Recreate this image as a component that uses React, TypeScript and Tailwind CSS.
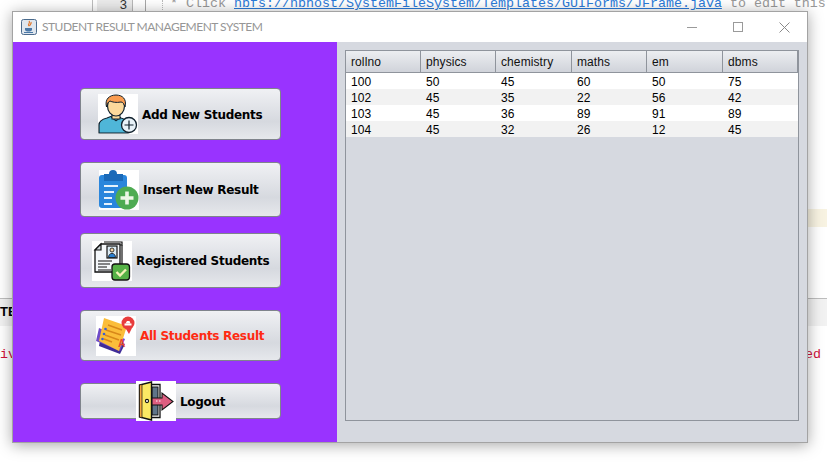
const F = "font-['Liberation_Sans',sans-serif]";

function IconAdd() {
  return (
    <svg viewBox="0 0 40 40" className="w-10 h-10 bg-white shrink-0">
      <path d="M1 39v-8c0-4 4-6 8-7l5-2h4l5 2c4 1 7 3 7 7v8z" fill="#4fb6d8" stroke="#10202c" strokeWidth="1.2" />
      <path d="M13 23l5 4 5-4" fill="#3c93b5" stroke="#10202c" strokeWidth="1" />
      <rect x="14" y="17" width="8" height="8" fill="#fbd89a" stroke="#10202c" strokeWidth="1" />
      <ellipse cx="18" cy="12" rx="8.5" ry="10" fill="#fcd99b" stroke="#10202c" strokeWidth="1.2" />
      <path d="M8.5 13c-2-8 3-12 9.500-12s11 4 9 12c-1-3-2-5-4-5-5 1-9 0-11-1-2 1-3 3-3.500 6z" fill="#fa9c50" stroke="#10202c" strokeWidth="1" />
      <circle cx="31" cy="31" r="7.5" fill="#e8f2f8" stroke="#10202c" strokeWidth="1.3" />
      <path d="M31 26.500v9M26.500 31h9" stroke="#10202c" strokeWidth="1.2" />
    </svg>
  );
}
function IconInsert() {
  return (
    <svg viewBox="0 0 40 40" className="w-10 h-10 bg-white shrink-0">
      <rect x="0" y="5" width="28" height="33" rx="3" fill="#2a86dc" />
      <path d="M14 0a4 4 0 0 1 4 4h6v7H5V4h5a4 4 0 0 1 4-4z" fill="#1a69b8" />
      <path d="M5 16h14M5 22h10M5 28h8M5 34h8" stroke="#e6f2fc" strokeWidth="2.2" />
      <circle cx="28" cy="28" r="11.500" fill="#4eab52" />
      <path d="M28 21.500v13M21.500 28h13" stroke="#eef6e8" strokeWidth="3.600" />
    </svg>
  );
}
function IconRegistered() {
  return (
    <svg viewBox="0 0 40 40" className="w-10 h-10 bg-white shrink-0">
      <path d="M12 1h18v3h-2" fill="none" stroke="#111" strokeWidth="1.200" />
      <path d="M30 4v20" stroke="#111" strokeWidth="1.200" />
      <path d="M9 3h19v28H3V9z" fill="#f4f7fa" stroke="#111" strokeWidth="1.300" />
      <path d="M3 9h6V3z" fill="#cfd6dc" stroke="#111" strokeWidth="1.200" />
      <rect x="15" y="5" width="10" height="12" fill="#dcecf5" stroke="#111" strokeWidth="1.200" />
      <circle cx="20" cy="9" r="2" fill="#f2d4a8" stroke="#111" strokeWidth="0.800" />
      <path d="M16.500 16.500c0-5.500 7-5.500 7 0z" fill="#2a7fd0" stroke="#111" strokeWidth="0.800" />
      <path d="M6 20h14M6 23h12M6 26h9M6 29h13" stroke="#111" strokeWidth="1.200" />
      <rect x="20" y="23" width="17.500" height="16" rx="3" fill="#55b146" stroke="#111" strokeWidth="1.300" />
      <path d="M24.500 31l3.500 3.500 6-6" fill="none" stroke="#f4f2b8" strokeWidth="2.400" />
    </svg>
  );
}
function IconAll() {
  return (
    <svg viewBox="0 0 40 40" className="w-10 h-10 bg-white shrink-0">
      <path d="M5 18l24 10-5 10L3 30z" fill="#3f2c98" />
      <path d="M3 12l26 11-5 12L0 25z" fill="#6f4cc8" />
      <path d="M8 2l23 8-8 25L3 25z" fill="#fbbd3a" />
      <path d="M12 9l14 5M10 14l15 5M9 19l14 5M8 23l8 3" stroke="#d8871a" strokeWidth="1.400" />
      <circle cx="9.500" cy="13" r="1.300" fill="#3c5fd0" />
      <circle cx="8" cy="18" r="1.300" fill="#3c5fd0" />
      <circle cx="6.500" cy="23" r="1.300" fill="#3c5fd0" />
      <text x="22" y="31" fontSize="10" fontWeight="700" fill="#e8452c" fontFamily="Liberation Sans">A</text>
      <path d="M30 13l3 5 3-6z" fill="#e83c3c" />
      <circle cx="32" cy="7" r="6.500" fill="#e83c3c" />
      <path d="M28.500 7.500h7v2h-7z" fill="#fff" />
      <path d="M31 5h2.500l1 2.500h-5z" fill="#fff" />
    </svg>
  );
}
function IconLogout() {
  return (
    <svg viewBox="0 0 40 40" className="w-10 h-10 bg-white shrink-0">
      <rect x="16" y="6" width="6" height="28" fill="#5f7489" stroke="#111" strokeWidth="1" />
      <path d="M16 3.500h8v28M16 36.500h8v-6" fill="none" stroke="#111" strokeWidth="1.300" />
      <path d="M15.500 1L3.500 4v32l12 3z" fill="#fbe964" stroke="#111" strokeWidth="1.400" />
      <path d="M3.500 4v32l2.500 .8V3.400z" fill="#f5a83c" stroke="#111" strokeWidth="0.700" />
      <circle cx="11" cy="20" r="1.600" fill="#fff" stroke="#111" strokeWidth="1.100" />
      <path d="M16 17h10v-5l11 8.500-11 8.500v-5H16z" fill="#dd5e80" stroke="#111" strokeWidth="1.100" />
      <path d="M20 20h1.500M23 20h1.500" stroke="#fff" strokeWidth="1" />
    </svg>
  );
}

function Btn({ h, mt, pl, gap, red, icon, label }: { h: string; mt: string; pl: string; gap: string; red?: boolean; icon: React.ReactNode; label: string }) {
  return (
    <div className={`${h} ${mt} w-[201px] ml-[67px] rounded-[4px] border border-[#7f848c] bg-[linear-gradient(180deg,#f0f1f4_0%,#d6d9df_65%,#e6e8ec_100%)] flex items-center ${pl} ${gap}`}>
      {icon}
      <span className={`font-['DejaVu_Sans',sans-serif] text-[12px] pt-px font-bold whitespace-nowrap tracking-[-0.3px] ${red ? 'text-[#ff2a12]' : 'text-black'}`}>{label}</span>
    </div>
  );
}

const cols = ['rollno', 'physics', 'chemistry', 'maths', 'em', 'dbms'];
const rows = [
  ['100', '50', '45', '60', '50', '75'],
  ['102', '45', '35', '22', '56', '42'],
  ['103', '45', '36', '89', '91', '89'],
  ['104', '45', '32', '26', '12', '45'],
];
const grid = 'grid grid-cols-[75px_75px_76px_75px_76px_75px]';

export default function App() {
  return (
    <div className="relative w-[827px] h-[465px] bg-white overflow-hidden">
      {/* editor behind */}
      <div className="absolute left-[92px] top-0 w-px h-[12px] bg-[#bdbdbd]" />
      <div className="absolute left-[97px] top-0 w-[36px] h-[12px] bg-[#ebebeb] border-r border-[#b8b8b8] text-right pr-[5px] font-['Liberation_Sans'] text-[13px] leading-[9px] text-[#333]">3</div>
      <div className="absolute left-[145px] top-0 h-[12px] w-px bg-[#a8a8a8]" />
      <div className="absolute left-[162px] top-0 h-[12px] border-l border-dotted border-[#bbbbbb]" />
      <div className="absolute left-[170px] top-[-4px] whitespace-nowrap font-['Liberation_Mono',monospace] text-[13.33px] leading-[16px] text-[#999]">
        * Click <span className="text-[#2a7ad8] underline">nbfs://nbhost/SystemFileSystem/Templates/GUIForms/JFrame.java</span> to edit this
      </div>
      <div className="absolute left-[807px] top-[209px] w-[20px] h-[18px] bg-[#f8f3e2]" />
      <div className="absolute left-0 top-[298px] w-[827px] h-[28px] border-t border-[#bdbdbd] bg-[#f2f2f2] font-['Liberation_Sans'] font-bold text-[13px] leading-[26px] text-black">TE</div>
      <div className="absolute left-0 top-[347px] font-['Liberation_Mono',monospace] text-[13.33px] leading-[16px] text-[#d0103a]">iv</div>
      <div className="absolute left-[805px] top-[347px] font-['Liberation_Mono',monospace] text-[13.33px] leading-[16px] text-[#d0103a]">ed</div>

      {/* window */}
      <div className="absolute left-[12px] top-[11px] w-[796px] h-[432px] border border-[#a3a3a3] bg-white flex flex-col shadow-[0_2px_14px_rgba(0,0,0,0.35)]">
        <div className="h-[30px] shrink-0 flex items-center pl-[8px] bg-white">
          <svg viewBox="0 0 16 16" className="w-4 h-4 shrink-0">
            <rect x="0.5" y="0.5" width="15" height="15" rx="2" fill="#dfe6ee" stroke="#4a6a8c" />
            <path d="M8 2c2 2-2 3 0 5M10 3c1 2-2 3-1 4" stroke="#e0762a" strokeWidth="1.2" fill="none" />
            <path d="M4 9h7v1.5c0 1.5-1.5 2-3.5 2S4 12 4 10.5z" fill="#4a78a8" />
            <path d="M3 13.5h9" stroke="#4a78a8" />
          </svg>
          <span className="ml-[5px] font-['Lato',sans-serif] text-[12px] tracking-[-0.5px] text-[#969696] whitespace-nowrap">STUDENT RESULT MANAGEMENT SYSTEM</span>
          <div className="ml-auto flex items-center">
            <div className="w-[46px] h-[30px] flex items-center justify-center"><div className="w-[10px] h-px bg-[#9a9a9a]" /></div>
            <div className="w-[46px] h-[30px] flex items-center justify-center"><div className="w-[10px] h-[10px] border border-[#9a9a9a]" /></div>
            <div className="w-[46px] h-[30px] flex items-center justify-center">
              <svg viewBox="0 0 11 11" className="w-[11px] h-[11px]"><path d="M0.5 0.5l10 10M10.5 0.5l-10 10" stroke="#8a8a8a" fill="none" /></svg>
            </div>
          </div>
        </div>
        <div className="flex flex-1 min-h-0">
          <div className="w-[324px] shrink-0 bg-[#9933ff] flex flex-col">
            <Btn h="h-[52px]" mt="mt-[46px]" pl="pl-[17px]" gap="gap-[4px]" icon={<IconAdd />} label="Add New Students" />
            <Btn h="h-[55px]" mt="mt-[22px]" pl="pl-[18px]" gap="gap-[4px]" icon={<IconInsert />} label="Insert New Result" />
            <Btn h="h-[55px]" mt="mt-[16px]" pl="pl-[11px]" gap="gap-[4px]" icon={<IconRegistered />} label="Registered Students" />
            <Btn h="h-[51px]" mt="mt-[22px]" pl="pl-[15px]" gap="gap-[4px]" red icon={<IconAll />} label="All Students Result" />
            <Btn h="h-[36px]" mt="mt-[22px]" pl="pl-[55px]" gap="gap-[4px]" icon={<IconLogout />} label="Logout" />
          </div>
          <div className="flex-1 bg-[#d6d9e0] pt-[8px] pl-[8px] pr-[8px] pb-[21px]">
            <div className="h-full border border-[#8f949c] flex flex-col">
              <div className={`${grid} h-[22px] shrink-0 border-b border-[#8f949c] bg-[linear-gradient(180deg,#eceef1_0%,#d0d3da_100%)]`}>
                {cols.map((c) => (
                  <div key={c} className={`${F} text-[12px] leading-[23px] tracking-[0.1px] pl-[5px] text-[#111] border-r border-[#8f949c]`}>{c}</div>
                ))}
              </div>
              {rows.map((r, i) => (
                <div key={r[0]} className={`${grid} h-[16px] shrink-0 ${i % 2 ? 'bg-[#f2f2f2]' : 'bg-white'}`}>
                  {r.map((v, j) => (
                    <div key={j} className={`${F} text-[12px] leading-[18px] tracking-[0.1px] pl-[5px] text-black`}>{v}</div>
                  ))}
                </div>
              ))}
            </div>
          </div>
        </div>
      </div>
    </div>
  );
}
